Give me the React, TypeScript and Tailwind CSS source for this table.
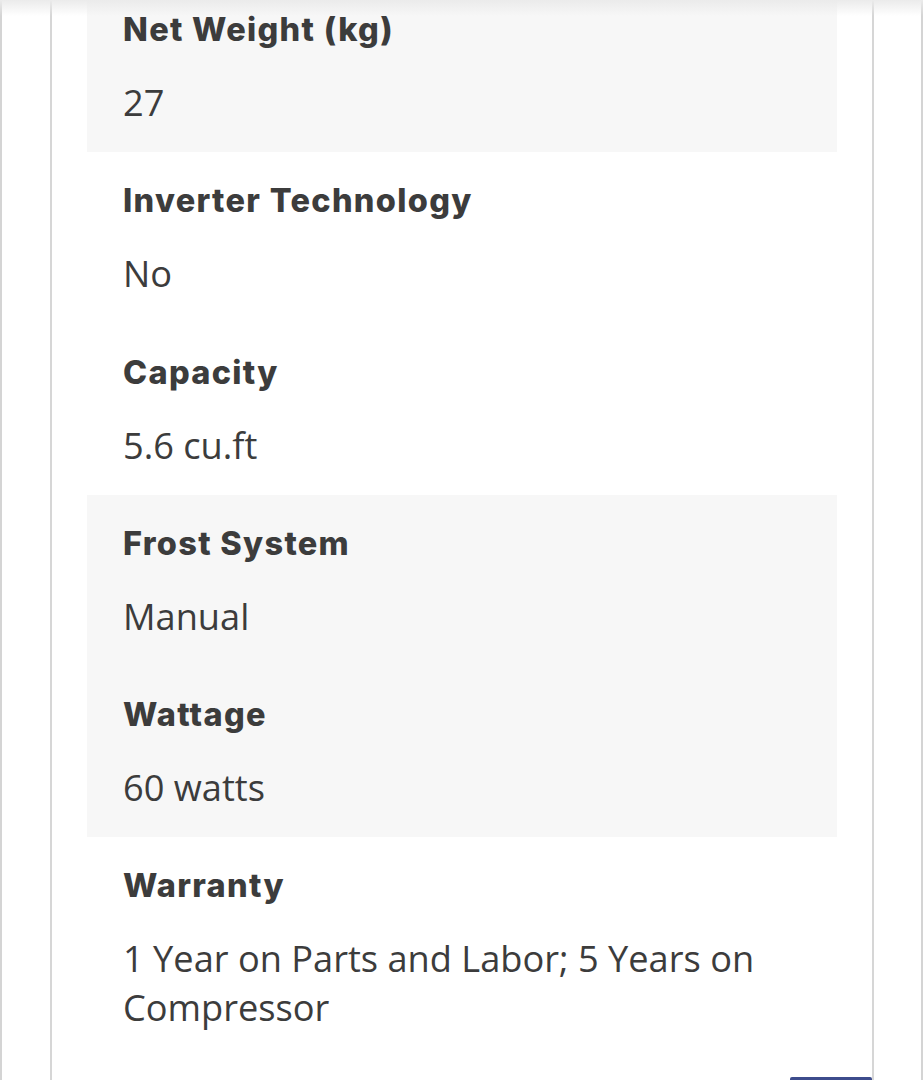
import React from "react";

const rows: { label: string; value: string; grey: boolean }[] = [
  { label: "Net Weight (kg)", value: "27", grey: true },
  { label: "Inverter Technology", value: "No", grey: false },
  { label: "Capacity", value: "5.6 cu.ft", grey: false },
  { label: "Frost System", value: "Manual", grey: true },
  { label: "Wattage", value: "60 watts", grey: true },
  { label: "Warranty", value: "1 Year on Parts and Labor; 5 Years on Compressor", grey: false },
];

export default function App() {
  return (
    <div className="relative w-[923px] h-[1080px] overflow-hidden bg-white">
      <div className="absolute inset-x-0 top-0 h-[16px] bg-gradient-to-b from-[#ebebeb] to-white/0 z-10" />
      <div className="flex h-full border-l-2 border-r-2 border-[#d4d4d4]">
        <div className="ml-[48px] w-[824px] h-[1140px] border-l-2 border-r-2 border-[#d6d6d6] mt-[-19px] flex flex-col">
          <div className="px-[35px]">
            {rows.map((r) => (
              <div
                key={r.label}
                className={`${r.grey ? "bg-[#f7f7f7]" : "bg-white"} h-[171.3px] pl-[36px] pr-[20px] pt-[28px] text-[#3c3c3c]`}
              >
                <div className="font-['Inter',sans-serif] font-extrabold text-[32.5px] leading-[42px] tracking-[1.3px]">
                  {r.label}
                </div>
                <div className="font-['Open_Sans',sans-serif] text-[36.2px] leading-[49px] mt-[27px]">
                  {r.value}
                </div>
              </div>
            ))}
          </div>
          <div className="flex justify-end">
            <div className="w-[82px] h-[6px] bg-[#3d4c8c] mt-[68px] rounded-t-[2px]" />
          </div>
        </div>
      </div>
    </div>
  );
}
